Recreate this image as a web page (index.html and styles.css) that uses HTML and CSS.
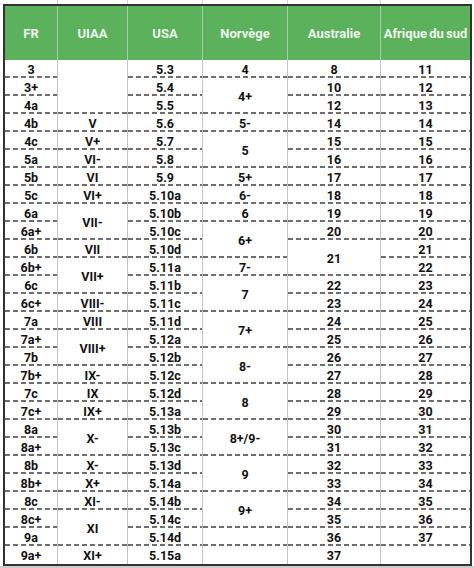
FILE: index.html
```html
<!DOCTYPE html>
<html lang="fr">
<head>
<meta charset="utf-8">
<title>Cotations escalade</title>
<link rel="stylesheet" href="styles.css">
</head>
<body>
<div class="top"><span></span><span></span><span></span><span></span><span></span><span></span></div>
<div class="grades">
  <div class="h">FR</div><div class="h">UIAA</div><div class="h">USA</div><div class="h">Norvège</div><div class="h">Australie</div><div class="h r">Afrique du sud</div>

  <div class="c">3</div><div class="c s3"></div><div class="c">5.3</div><div class="c">4</div><div class="c">8</div><div class="c r">11</div>
  <div class="c">3+</div><div class="c">5.4</div><div class="c s2">4+</div><div class="c">10</div><div class="c r">12</div>
  <div class="c">4a</div><div class="c">5.5</div><div class="c">12</div><div class="c r">13</div>
  <div class="c">4b</div><div class="c">V</div><div class="c">5.6</div><div class="c">5-</div><div class="c">14</div><div class="c r">14</div>
  <div class="c">4c</div><div class="c">V+</div><div class="c">5.7</div><div class="c s2">5</div><div class="c">15</div><div class="c r">15</div>
  <div class="c">5a</div><div class="c">VI-</div><div class="c">5.8</div><div class="c">16</div><div class="c r">16</div>
  <div class="c">5b</div><div class="c">VI</div><div class="c">5.9</div><div class="c">5+</div><div class="c">17</div><div class="c r">17</div>
  <div class="c">5c</div><div class="c">VI+</div><div class="c">5.10a</div><div class="c">6-</div><div class="c">18</div><div class="c r">18</div>
  <div class="c">6a</div><div class="c s2">VII-</div><div class="c">5.10b</div><div class="c">6</div><div class="c">19</div><div class="c r">19</div>
  <div class="c">6a+</div><div class="c">5.10c</div><div class="c s2">6+</div><div class="c">20</div><div class="c r">20</div>
  <div class="c">6b</div><div class="c">VII</div><div class="c">5.10d</div><div class="c s2">21</div><div class="c r">21</div>
  <div class="c">6b+</div><div class="c s2">VII+</div><div class="c">5.11a</div><div class="c">7-</div><div class="c r">22</div>
  <div class="c">6c</div><div class="c">5.11b</div><div class="c s2">7</div><div class="c">22</div><div class="c r">23</div>
  <div class="c">6c+</div><div class="c">VIII-</div><div class="c">5.11c</div><div class="c">23</div><div class="c r">24</div>
  <div class="c">7a</div><div class="c">VIII</div><div class="c">5.11d</div><div class="c s2">7+</div><div class="c">24</div><div class="c r">25</div>
  <div class="c">7a+</div><div class="c s2">VIII+</div><div class="c">5.12a</div><div class="c">25</div><div class="c r">26</div>
  <div class="c">7b</div><div class="c">5.12b</div><div class="c s2">8-</div><div class="c">26</div><div class="c r">27</div>
  <div class="c">7b+</div><div class="c">IX-</div><div class="c">5.12c</div><div class="c">27</div><div class="c r">28</div>
  <div class="c">7c</div><div class="c">IX</div><div class="c">5.12d</div><div class="c s2">8</div><div class="c">28</div><div class="c r">29</div>
  <div class="c">7c+</div><div class="c">IX+</div><div class="c">5.13a</div><div class="c">29</div><div class="c r">30</div>
  <div class="c">8a</div><div class="c s2">X-</div><div class="c">5.13b</div><div class="c s2">8+/9-</div><div class="c">30</div><div class="c r">31</div>
  <div class="c">8a+</div><div class="c">5.13c</div><div class="c">31</div><div class="c r">32</div>
  <div class="c">8b</div><div class="c">X-</div><div class="c">5.13d</div><div class="c s2">9</div><div class="c">32</div><div class="c r">33</div>
  <div class="c">8b+</div><div class="c">X+</div><div class="c">5.14a</div><div class="c">33</div><div class="c r">34</div>
  <div class="c">8c</div><div class="c">XI-</div><div class="c">5.14b</div><div class="c s2">9+</div><div class="c">34</div><div class="c r">35</div>
  <div class="c">8c+</div><div class="c s2">XI</div><div class="c">5.14c</div><div class="c">35</div><div class="c r">36</div>
  <div class="c">9a</div><div class="c">5.14d</div><div class="c"></div><div class="c">36</div><div class="c r">37</div>
  <div class="c b">9a+</div><div class="c b">XI+</div><div class="c b">5.15a</div><div class="c b"></div><div class="c b">37</div><div class="c r b"></div>
</div>
<div class="bottom"></div>
</body>
</html>
```

FILE: styles.css
```css
html, body {
  margin: 0;
  padding: 0;
  background: #ffffff;
}

body {
  width: 474px;
  height: 568px;
  overflow: hidden;
  font-family: Roboto, "Liberation Sans", sans-serif;
}

.top {
  display: grid;
  grid-template-columns: 53px 70px 75px 85px 93px 89px;
  height: 4px;
  margin-left: 5px;
}

.top span {
  border-right: 1px solid #d4d4d4;
}

.top span:last-child {
  border-right: none;
}

.grades {
  box-sizing: border-box;
  width: 469px;
  margin-left: 3px;
  border: 2px solid #333333;
  display: grid;
  grid-template-columns: 53px 70px 75px 85px 93px 89px;
  grid-template-rows: 54px;
  grid-auto-rows: 18px;
}

.h {
  box-sizing: border-box;
  background: #5cb15c;
  color: #eef6ee;
  font-weight: 700;
  font-size: 13px;
  word-spacing: -1px;
  display: flex;
  align-items: center;
  justify-content: center;
  border-right: 1px solid #a3d2a3;
  white-space: nowrap;
}

.c {
  box-sizing: border-box;
  color: #111111;
  font-weight: 700;
  font-size: 12.5px;
  display: flex;
  align-items: center;
  justify-content: center;
  border-right: 1px solid #c4c4c4;
  background: repeating-linear-gradient(90deg, #6e6e6e 0 5px, transparent 5px 8px) left bottom / 100% 2px no-repeat;
}

.s2 {
  grid-row: span 2;
}

.s3 {
  grid-row: span 3;
}

.r {
  border-right: none;
}

.b {
  background: none;
}

.bottom {
  height: 2px;
  background: #cdcdcd;
}
```
